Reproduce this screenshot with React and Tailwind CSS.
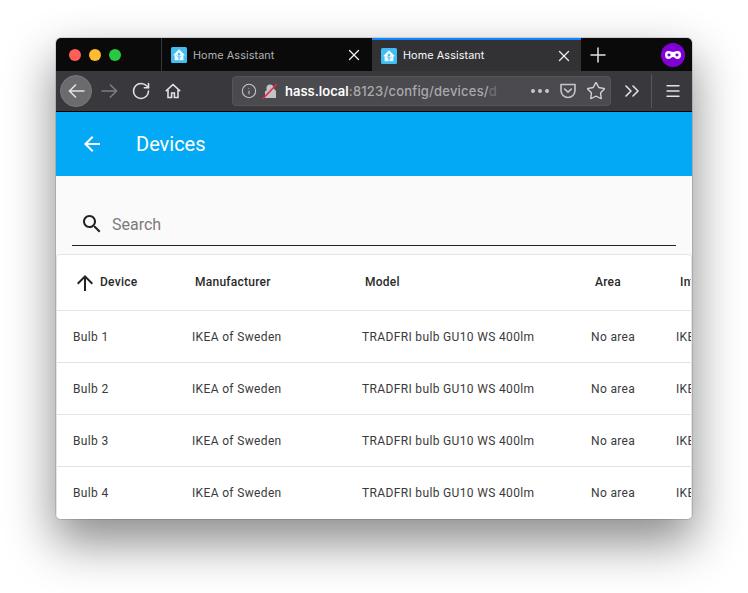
import { ChevronsRight, Ellipsis, Info, Menu, Plus, RotateCw, Star, X } from 'lucide-react';

const devices = ['Bulb 1', 'Bulb 2', 'Bulb 3', 'Bulb 4'];

const MaterialIcon = ({ d, className }) => (
  <svg width="24" height="24" viewBox="0 0 24 24" fill="currentColor" className={className}>
    <path d={d} />
  </svg>
);

const arrowBack = 'M20 11H7.83l5.59-5.59L12 4l-8 8 8 8 1.41-1.41L7.83 13H20v-2z';
const arrowUp = 'M4 12l1.41 1.41L11 7.83V20h2V7.83l5.58 5.59L20 12l-8-8-8 8z';
const magnify = 'M15.5 14h-.79l-.28-.27C15.41 12.59 16 11.11 16 9.5 16 5.91 13.09 3 9.5 3S3 5.91 3 9.5 5.91 16 9.5 16c1.61 0 3.09-.59 4.23-1.57l.27.28v.79l5 4.99L20.49 19l-4.99-5zm-6 0C7.01 14 5 11.99 5 9.5S7.01 5 9.5 5 14 7.01 14 9.5 11.99 14 9.5 14z';

const Favicon = () => (
  <svg width="16" height="16" viewBox="0 0 16 16" className="shrink-0">
    <rect width="16" height="16" rx="1.5" fill="#41bdf5" />
    <path d="M8 2.2 L14 8.2 H12.4 V13.2 H3.6 V8.2 H2 Z" fill="#fff" opacity="0.92" />
    <circle cx="8" cy="7" r="1.3" fill="#41bdf5" />
    <path d="M8 8 V13.2 M8 10.5 L5.6 8.5 M8 11 L10.4 9" stroke="#41bdf5" strokeWidth="0.9" fill="none" />
  </svg>
);

const Tab = ({ active }) => (
  <div className={active
    ? 'w-[209px] h-full flex items-center pl-[9px] pr-[8px] bg-[#323234] border-t-2 border-[#0a84ff] text-[#f9f9fa]'
    : 'w-[211px] h-full flex items-center pl-[9px] pr-[9px] border-l border-[#38383d] text-[#b1b1b3]'}>
    <Favicon />
    <span className={active
      ? "ml-[6px] pt-[1px] flex-1 font-['Inter',sans-serif] text-[10.8px] tracking-[0.1px]"
      : "ml-[6px] pt-[3px] flex-1 font-['Inter',sans-serif] text-[10.8px] tracking-[0.1px]"}>Home Assistant</span>
    <X size={18} strokeWidth={1.7} className="text-[#f0f0f0]" />
  </div>
);

const Toolbar = () => (
  <div className="h-[41px] bg-[#38383d] flex items-center pl-[4px] text-[#e2e2e4] border-b border-black shrink-0">
    <div className="w-[32px] h-[32px] rounded-full bg-[#6b6b6e] flex items-center justify-center border border-[#7a7a7c]">
      <svg width="17" height="16" viewBox="0 0 17 16" fill="none" stroke="currentColor" strokeWidth="1.6">
        <path d="M16.5 8 H1.5 M8 1.5 L1.5 8 L8 14.5" />
      </svg>
    </div>
    <svg width="17" height="16" viewBox="0 0 17 16" fill="none" stroke="#7d7d80" strokeWidth="1.6" className="ml-[9px]">
      <path d="M0.5 8 H15.5 M9 1.5 L15.5 8 L9 14.5" />
    </svg>
    <RotateCw size={20} strokeWidth={1.9} className="ml-[13px]" />
    <svg width="16" height="16" viewBox="0 0 16 16" fill="none" stroke="currentColor" strokeWidth="1.6" className="ml-[14px]">
      <path d="M0.8 8.2 L8 1.5 L15.2 8.2 M3 7 V14.5 H6.6 V10 H9.4 V14.5 H13 V7" />
    </svg>
    <div className="ml-[51px] w-[379px] h-[30px] rounded-[4px] bg-[#4a4a4f] border border-[#55555a] flex items-center pl-[8px]">
      <Info size={16} strokeWidth={1.6} className="text-[#c8c8ca]" />
      <svg width="16" height="16" viewBox="0 0 16 16" className="ml-[5px]">
        <path d="M3 15 V8 H4.5 V5 A3.5 3.5 0 0 1 11.5 5 L14 8 V15 Z" fill="#c4c4c6" />
        <path d="M1 15.5 L15 1" stroke="#e22850" strokeWidth="1.7" />
      </svg>
      <div className="ml-[7px] pt-[2px] w-[243px] overflow-hidden whitespace-nowrap font-['Inter',sans-serif] text-[13px] font-medium text-[#a9a9ab] tracking-[0.2px]">
        <span className="text-white font-semibold tracking-normal">hass.local</span>:8123/config/devices/<span className="text-[#6f6f73]">d</span>
      </div>
      <Ellipsis size={24} strokeWidth={2} className="text-[#c8c8ca]" />
      <svg width="16" height="16" viewBox="0 0 16 16" className="ml-[8px]" fill="none" stroke="#c8c8ca" strokeWidth="1.6">
        <path d="M1 1.5 H15 V7.5 A7 7 0 0 1 1 7.5 Z" strokeLinejoin="round" />
        <path d="M4.6 6 L8 9.2 L11.4 6" strokeLinecap="round" />
      </svg>
      <Star size={20} strokeWidth={1.6} className="ml-[10px] text-[#d8d8da]" />
    </div>
    <ChevronsRight size={24} strokeWidth={1.6} className="ml-[9px]" />
    <div className="ml-[7px] w-px h-[34px] bg-[#55555a]" />
    <Menu size={18} strokeWidth={1.8} className="ml-[12px]" />
  </div>
);

const Row = ({ name }) => (
  <div className="h-[52px] flex items-center pl-[16px] border-b border-[#e3e3e3] last:border-b-0 whitespace-nowrap text-[12px] tracking-[0.35px] text-[#3a3a3a]">
    <div className="w-[119px] shrink-0">{name}</div>
    <div className="w-[170px] shrink-0">IKEA of Sweden</div>
    <div className="w-[229px] shrink-0">TRADFRI bulb GU10 WS 400lm</div>
    <div className="w-[85px] shrink-0">No area</div>
    <div className="shrink-0">IKEA of Sweden</div>
  </div>
);

export default function App() {
  return (
    <div className="w-[748px] h-[593px] overflow-hidden bg-white pt-[38px] pl-[56px] font-['Roboto',sans-serif]">
      <div className="w-[636px] h-[481px] rounded-[5px] overflow-hidden flex flex-col shadow-[0_22px_48px_2px_rgba(0,0,0,0.45),0_0_0_1px_rgba(0,0,0,0.12)]">
        {/* tab strip */}
        <div className="h-[33px] bg-[#0a0a0b] flex items-center shrink-0">
          <div className="w-[105px] flex items-center gap-2 pl-[13px]">
            <span className="w-3 h-3 rounded-full bg-[#ff5f57]" />
            <span className="w-3 h-3 rounded-full bg-[#febc2e]" />
            <span className="w-3 h-3 rounded-full bg-[#28c840]" />
          </div>
          <Tab />
          <Tab active />
          <Plus size={24} strokeWidth={1.5} className="ml-[5px] text-[#e2e2e4]" />
          <div className="ml-[51px] w-6 h-6 rounded-full bg-[#8000d7] flex items-center justify-center">
            <svg width="16" height="8" viewBox="0 0 16 8">
              <path fillRule="evenodd" fill="#fff" d="M3.5 0 C5.5 0 6.5 1 8 1 C9.5 1 10.5 0 12.5 0 C14.8 0 16 1.6 16 4 C16 6.4 14.6 8 12.5 8 C10.5 8 9.5 6 8 6 C6.5 6 5.5 8 3.5 8 C1.4 8 0 6.4 0 4 C0 1.6 1.2 0 3.5 0 Z M4 2.6 A1.6 1.4 0 1 0 4 5.4 A1.6 1.4 0 1 0 4 2.6 Z M12 2.6 A1.6 1.4 0 1 0 12 5.4 A1.6 1.4 0 1 0 12 2.6 Z" />
            </svg>
          </div>
        </div>
        <Toolbar />
        {/* app header */}
        <div className="h-[64px] bg-[#03a9f4] flex items-center pl-[24px] text-white shrink-0">
          <MaterialIcon d={arrowBack} />
          <span className="ml-[32px] text-[20px]">Devices</span>
        </div>
        {/* search + table */}
        <div className="flex-1 bg-[#fafafa] flex flex-col min-h-0">
          <div className="h-[70px] mx-[16px] border-b border-[#222] flex items-end pb-[8px] pl-[8px] shrink-0">
            <MaterialIcon d={magnify} className="text-[#222] mb-[1px]" />
            <span className="ml-[8px] text-[16px] leading-[24px] text-[#7b7b7b]">Search</span>
          </div>
          <div className="mt-[8px] flex-1 bg-white rounded-[4px] border border-[#e6e6e6] border-b-0 overflow-hidden">
            <div className="h-[56px] flex items-center pl-[16px] border-b border-[#e3e3e3] whitespace-nowrap text-[12px] font-medium tracking-[0.25px] text-[#2a2a2a]">
              <div className="w-[122px] shrink-0 flex items-center">
                <MaterialIcon d={arrowUp} className="text-[#222] mr-[3px]" />
                <span className="pb-[1px]">Device</span>
              </div>
              <div className="w-[170px] shrink-0 pb-[1px]">Manufacturer</div>
              <div className="w-[230px] shrink-0 pb-[1px]">Model</div>
              <div className="w-[85px] shrink-0 pb-[1px]">Area</div>
              <div className="shrink-0 pb-[1px]">Integration</div>
            </div>
            {devices.map((d) => (
              <Row key={d} name={d} />
            ))}
          </div>
        </div>
      </div>
    </div>
  );
}
